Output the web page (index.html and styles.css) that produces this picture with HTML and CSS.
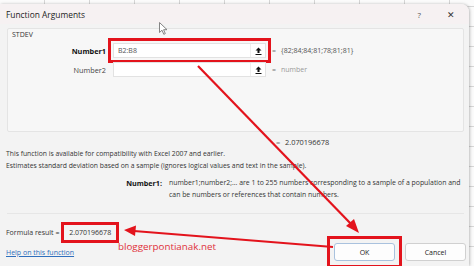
FILE: index.html
```html
<!DOCTYPE html>
<html>
<head>
<meta charset="utf-8">
<title>Function Arguments</title>
<link rel="stylesheet" href="styles.css">
</head>
<body>
<div class="sheet">
  <div class="dialog">
    <div class="titlebar">
      <span class="title">Function Arguments</span>
      <span class="help-q">?</span>
      <span class="close">&#x2715;</span>
    </div>

    <div class="group">
      <div class="fname">STDEV</div>
      <div class="arg">
        <label class="arg-label bold">Number1</label>
        <div class="field marked">
          <span class="field-text">B2:B8</span>
          <span class="ref-btn"><svg width="7" height="8" viewBox="0 0 7 8"><path d="M3.5 0.5 L6.5 3.5 L4.5 3.5 L4.5 6 L2.5 6 L2.5 3.5 L0.5 3.5 Z" fill="#111"/><rect x="0.5" y="7" width="6" height="1" fill="#111"/></svg></span>
        </div>
        <span class="eq">=</span>
        <span class="arg-value">{82;84;84;81;78;81;81}</span>
      </div>
      <div class="arg">
        <label class="arg-label">Number2</label>
        <div class="field">
          <span class="field-text"></span>
          <span class="ref-btn"><svg width="7" height="8" viewBox="0 0 7 8"><path d="M3.5 0.5 L6.5 3.5 L4.5 3.5 L4.5 6 L2.5 6 L2.5 3.5 L0.5 3.5 Z" fill="#111"/><rect x="0.5" y="7" width="6" height="1" fill="#111"/></svg></span>
        </div>
        <span class="eq">=</span>
        <span class="arg-value muted">number</span>
      </div>
    </div>

    <div class="result-row">
      <span class="eq">=</span>
      <span class="result-value">2.070196678</span>
    </div>

    <div class="desc">
      <p>This function is available for compatibility with Excel 2007 and earlier.</p>
      <p>Estimates standard deviation based on a sample (ignores logical values and text in the sample).</p>
    </div>

    <div class="arg-help">
      <span class="arg-help-name">Number1:</span>
      <span class="arg-help-text">number1;number2;... are 1 to 255 numbers corresponding to a sample of a population and can be numbers or references that contain numbers.</span>
    </div>

    <div class="footer">
      <div class="footer-left">
        <div class="formula">Formula result = <span class="formula-value">2.070196678</span></div>
        <a class="help-link" href="#">Help on this function</a>
      </div>
      <div class="buttons">
        <span class="ok-mark"><button class="btn ok">OK</button></span>
        <button class="btn">Cancel</button>
      </div>
    </div>
  </div>

  <div class="watermark">bloggerpontianak.net</div>

  <svg class="cursor" width="9" height="13" viewBox="0 0 9 13">
    <path d="M0.5 0.5 L0.5 10.5 L3 8.2 L4.8 12.3 L6.3 11.6 L4.6 7.7 L8 7.7 Z" fill="#fff" stroke="#777" stroke-width="0.9" stroke-linejoin="round"/>
  </svg>

  <svg class="arrows" width="474" height="266" viewBox="0 0 474 266">
    <line x1="198" y1="66" x2="352" y2="225" stroke="#e3131c" stroke-width="2.2"/>
    <path d="M359 233 L346 226 L354 219 Z" fill="#e3131c"/>
    <line x1="333" y1="247" x2="134" y2="231" stroke="#e3131c" stroke-width="2.2"/>
    <path d="M124 230 L136 225.5 L135 236 Z" fill="#e3131c"/>
  </svg>
</div>
</body>
</html>
```

FILE: styles.css
```css
body {
    margin: 0;
    font-family: "Open Sans", "Noto Sans", sans-serif;
    color: #333;
}

.sheet {
    position: relative;
    width: 474px;
    height: 266px;
    overflow: hidden;
    background-color: #fbfbfb;
    background-image:
        repeating-linear-gradient(90deg, transparent 0, transparent 44px, #d6d6d6 44px, #d6d6d6 45px),
        repeating-linear-gradient(0deg, transparent 0, transparent 19px, #d6d6d6 19px, #d6d6d6 20px);
    padding-top: 4px;
    box-sizing: border-box;
}

.dialog {
    width: 469px;
    height: 262px;
    background: #f3f3f3;
    border-radius: 0 8px 0 0;
    box-shadow: 1px 0 3px rgba(0, 0, 0, 0.25);
    box-sizing: border-box;
}

.titlebar {
    display: flex;
    align-items: center;
    height: 20px;
    background: #f6f1f2;
    border-radius: 0 8px 0 0;
    padding: 0 6px;
    font-size: 8.4px;
}

.title {
    flex: 1;
    color: #222;
}

.help-q {
    color: #555;
    margin-right: 26px;
    font-size: 8px;
}

.close {
    color: #333;
    font-size: 9px;
    margin-right: 8px;
}

.group {
    margin: 4px 5px 0 7px;
    height: 104px;
    background: #f7f7f7;
    border: 1px solid #e4e4e4;
    border-radius: 2px;
    box-sizing: border-box;
    font-size: 7px;
}

.fname {
    padding-left: 4px;
    height: 12px;
    line-height: 12px;
}

.arg {
    display: flex;
    align-items: center;
    height: 19px;
}

.arg-label {
    width: 98px;
    text-align: right;
    padding-right: 7px;
    color: #444;
    font-size: 7.3px;
}

.bold {
    font-weight: bold;
    color: #111;
}

.field {
    display: flex;
    align-items: center;
    width: 153px;
    height: 15px;
    background: #fff;
    border: 1px solid #e2e2e2;
    box-sizing: border-box;
}

.field.marked {
    outline: 3px solid #e3131c;
    outline-offset: 2px;
}

.field-text {
    flex: 1;
    padding-left: 4px;
    color: #555;
}

.ref-btn {
    display: flex;
    align-items: center;
    justify-content: center;
    width: 14px;
    height: 13px;
    border-left: 1px solid #eee;
}

.eq {
    width: 9px;
    margin-left: 6px;
    color: #777;
}

.arg-value {
    color: #555;
}

.muted {
    color: #9a9a9a;
}

.result-row {
    display: flex;
    align-items: center;
    height: 12px;
    margin-top: 4px;
    padding-left: 270px;
    font-size: 7.4px;
}

.result-value {
    color: #333;
}

.desc {
    padding-left: 6px;
    font-size: 6.8px;
}

.desc p {
    margin: 0;
    height: 12px;
    line-height: 12px;
}

.arg-help {
    display: flex;
    margin: 5px 5px 0 7px;
    font-size: 6.9px;
    line-height: 12px;
    height: 37px;
    border-bottom: 1px solid #e6e6e6;
    box-sizing: border-box;
}

.arg-help-name {
    width: 162px;
    flex: none;
    text-align: right;
    font-weight: bold;
    color: #111;
    padding-right: 7px;
    box-sizing: border-box;
    font-size: 7.2px;
}

.arg-help-text {
    width: 298px;
}

.footer {
    display: flex;
    justify-content: space-between;
    padding: 7px 3px 0 6px;
    font-size: 7px;
}

.formula {
    height: 23px;
    line-height: 23px;
}

.formula-value {
    margin-left: 6px;
    padding: 0 2px;
    outline: 3px solid #e3131c;
    outline-offset: 3px;
}

.help-link {
    display: block;
    color: #2f6fbd;
    margin-top: 4px;
}

.buttons {
    display: flex;
    align-items: flex-start;
    gap: 3px;
    margin-top: 15px;
}

.ok-mark {
    display: block;
    border: 3px solid #e3131c;
    padding: 4px 4px;
}

.btn {
    display: block;
    width: 61px;
    height: 18px;
    margin-top: 7px;
    background: #fdfdfd;
    border: 1px solid #d0d0d0;
    border-radius: 3px;
    font-family: "Open Sans", sans-serif;
    font-size: 7px;
    color: #222;
}

.btn.ok {
    margin-top: 0;
    border-color: #a9c2de;
}

.watermark {
    position: absolute;
    left: 118px;
    top: 240px;
    font-family: "Open Sans", sans-serif;
    font-size: 9.8px;
    color: #e0303a;
}

.cursor {
    position: absolute;
    left: 159px;
    top: 22px;
}

.arrows {
    position: absolute;
    left: 0;
    top: 0;
}
```
